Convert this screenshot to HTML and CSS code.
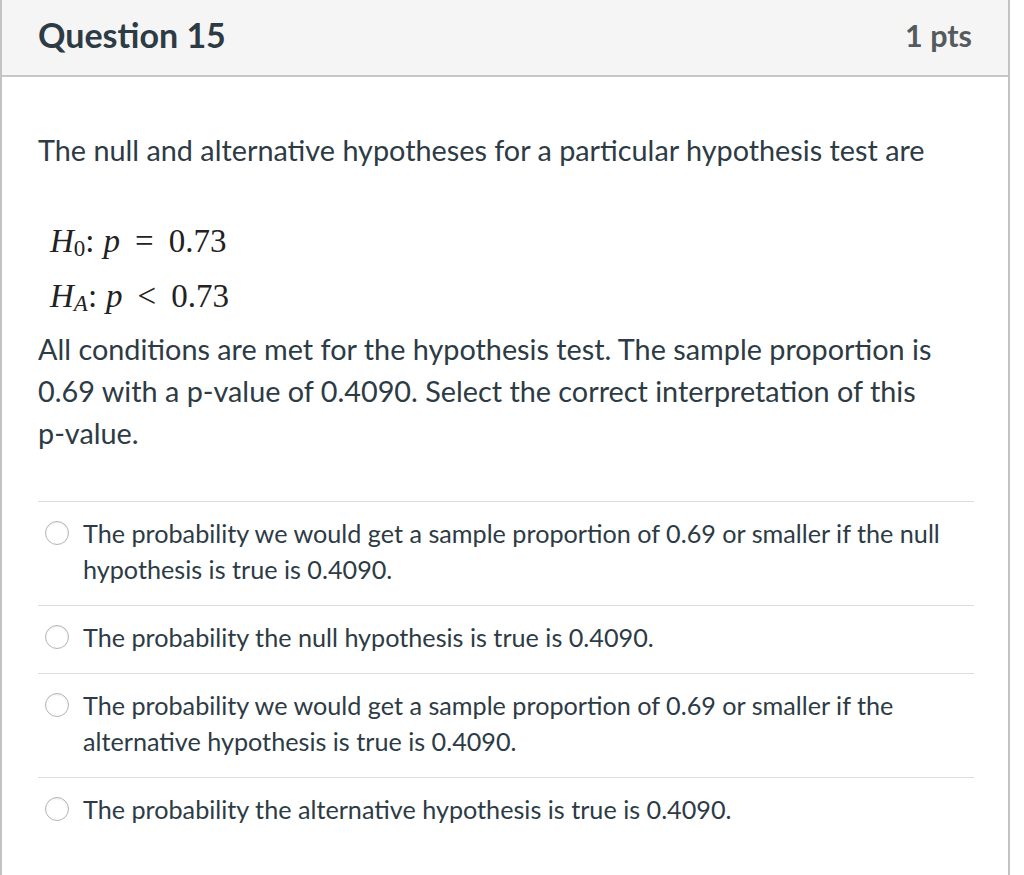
FILE: index.html
```html
<!DOCTYPE html>
<html>
<head>
<meta charset="utf-8">
<link rel="stylesheet" href="styles.css">
</head>
<body>
<div class="question">
  <div class="header">
    <span class="title">Question 15</span>
    <span class="pts">1 pts</span>
  </div>
  <div class="content">
    <p class="intro">The null and alternative hypotheses for a particular hypothesis test are</p>
    <div class="math">
      <div class="mline"><i>H</i><sub>0</sub>:<i class="pv">p</i><span class="op">=</span>0.73</div>
      <div class="mline"><i>H</i><sub><i>A</i></sub>:<i class="pv">p</i><span class="op">&lt;</span>0.73</div>
    </div>
    <p class="para">All conditions are met for the hypothesis test. The sample proportion is 0.69 with a p-value of 0.4090. Select the correct interpretation of this <span class="nowrap">p-value.</span></p>
    <div class="answers">
      <label class="answer"><span class="radio"></span><span class="atext">The probability we would get a sample proportion of 0.69 or smaller if the null hypothesis is true is 0.4090.</span></label>
      <label class="answer"><span class="radio"></span><span class="atext">The probability the null hypothesis is true is 0.4090.</span></label>
      <label class="answer"><span class="radio"></span><span class="atext">The probability we would get a sample proportion of 0.69 or smaller if the alternative hypothesis is true is 0.4090.</span></label>
      <label class="answer"><span class="radio"></span><span class="atext">The probability the alternative hypothesis is true is 0.4090.</span></label>
    </div>
  </div>
</div>
</body>
</html>
```

FILE: styles.css
```css
html, body {
  margin: 0;
  padding: 0;
  background: #fff;
}
body {
  font-family: Lato, "Open Sans", sans-serif;
  color: #2d3b45;
  height: 875px;
  overflow: hidden;
}
.question {
  width: 1006px;
  border-left: 2px solid #c3c3c3;
  border-right: 2px solid #c3c3c3;
  min-height: 875px;
  box-sizing: content-box;
}
.header {
  height: 75px;
  background: #f5f5f5;
  border-bottom: 2px solid #c7c7c7;
  display: flex;
  align-items: center;
  justify-content: space-between;
  padding: 0 36px 0 36px;
}
.title {
  font-weight: 700;
  font-size: 34px;
  color: #2d3b45;
  margin-top: -6px;
}
.pts {
  font-weight: 700;
  font-size: 30.5px;
  color: #555a5e;
  margin-top: -6px;
}
.content {
  padding: 0 34px 0 36px;
}
.intro {
  margin: 0;
  padding-top: 52px;
  font-size: 28.8px;
  line-height: 42px;
}
.math {
  margin-top: 43px;
  padding-left: 12px;
  font-family: "Liberation Serif", "DejaVu Serif", serif;
  font-size: 33px;
  color: #222;
}
.mline {
  height: 55px;
  line-height: 55px;
}
.mline sub {
  font-size: 23px;
  vertical-align: -4px;
  line-height: 0;
}
.pv {
  margin-left: 9px;
}
.op {
  margin: 0 15px 0 15px;
}
.para {
  margin: 0;
  margin-top: 4px;
  font-size: 28.8px;
  line-height: 42px;
}
.nowrap {
  white-space: nowrap;
}
.answers {
  margin-top: 47px;
}
.answer {
  display: flex;
  align-items: flex-start;
  border-top: 1px solid #dcdcdc;
  padding: 13px 0 18px;
}
.radio {
  flex: none;
  width: 22px;
  height: 22px;
  border: 1.5px solid #b4b4b4;
  border-radius: 50%;
  margin: 6px 14px 0 7px;
  background: #fff;
  box-shadow: inset 0 1px 2px rgba(0,0,0,0.08);
}
.atext {
  font-size: 25.2px;
  line-height: 36px;
}
```
